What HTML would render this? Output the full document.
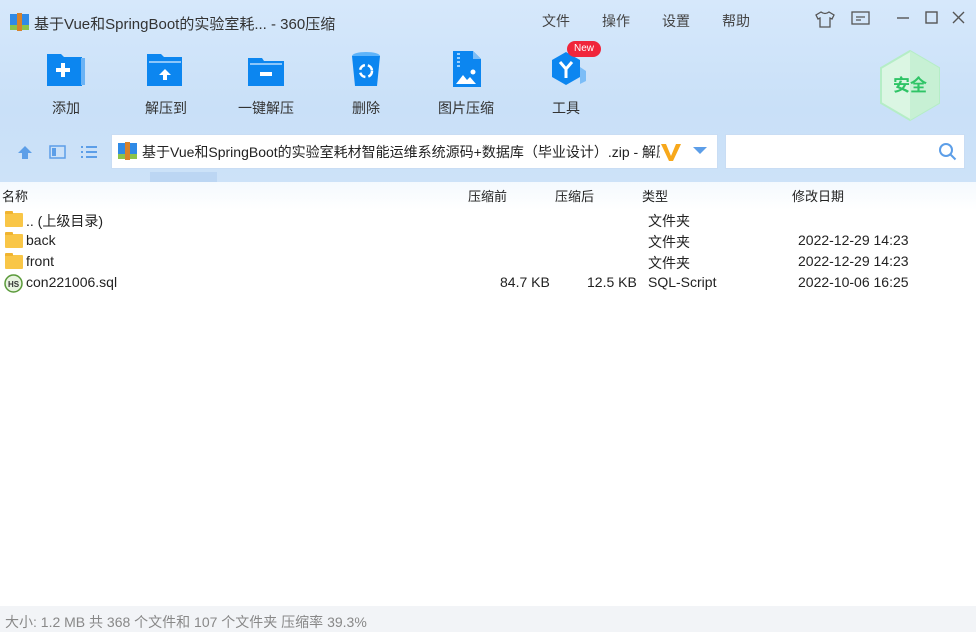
<!DOCTYPE html>
<html><head><meta charset="utf-8"><style>
*{margin:0;padding:0;box-sizing:border-box}
body{width:976px;height:640px;overflow:hidden;font-family:"Liberation Sans","Noto Sans CJK SC",sans-serif;background:#fff;position:relative;font-size:14px;color:#222}
.top{position:absolute;left:0;top:0;width:976px;height:182px;background:linear-gradient(180deg,#d6e8fb 0%,#c9e0f8 60%,#cde2f8 100%)}
.a{position:absolute;white-space:nowrap}
.menu{top:11px;font-size:14px;color:#444}
.tb{position:absolute;top:50px;width:40px;height:40px}
.lbl{position:absolute;top:98px;font-size:14px;color:#333;text-align:center;width:100px}
.hdr{position:absolute;top:182px;left:0;width:976px;height:28px;background:linear-gradient(#f4f9fe,#fff)}
.hdr span{position:absolute;top:4px;font-size:13px;color:#222}
.row{position:absolute;left:0;width:976px;height:21px;font-size:14px}
.row span{position:absolute;top:1px}
.fold{position:absolute;left:5px;top:3px;width:18px;height:14px;background:#f9c647;border-radius:1px}
.fold:before{content:"";position:absolute;left:0;top:-2px;width:8px;height:3px;background:#f0b430;border-radius:1px 1px 0 0}
</style></head><body>
<div class="top"></div>
<svg class="a" style="left:10px;top:13px" width="19" height="18"><rect x="0" y="1" width="19" height="16" fill="#2f8ae6"/><rect x="0" y="12" width="19" height="5" fill="#8bc34a"/><rect x="7" y="0" width="5" height="18" fill="#d8822a"/></svg>
<div class="a" style="left:34px;top:13px;font-size:15px;color:#333">基于Vue和SpringBoot的实验室耗... - 360压缩</div>
<div class="a menu" style="left:542px">文件</div>
<div class="a menu" style="left:602px">操作</div>
<div class="a menu" style="left:662px">设置</div>
<div class="a menu" style="left:722px">帮助</div>
<svg class="a" style="left:815px;top:10px" width="20" height="18" fill="none" stroke="#555" stroke-width="1.3"><path d="M6 2 L1 5 L3 9 L5 8 V17 H15 V8 L17 9 L19 5 L14 2 Q10 5 6 2Z"/></svg>
<svg class="a" style="left:851px;top:11px" width="20" height="16" fill="none" stroke="#555" stroke-width="1.3"><rect x="1" y="1" width="17" height="12"/><path d="M5 6H14M5 9H10"/></svg>
<svg class="a" style="left:897px;top:10px" width="80" height="18" stroke="#555" stroke-width="1.4" fill="none"><path d="M0 8H12"/><rect x="29" y="2" width="11" height="11"/><path d="M56 2L67 13M67 2L56 13"/></svg>
<svg class="tb" style="left:46px" viewBox="0 0 40 40"><path d="M1 4h14l3 3h18v29H1z" fill="#0c86f0"/><rect x="35" y="8" width="4" height="27" fill="#6bb3f5"/><path d="M17 13v14M10 20h14" stroke="#fff" stroke-width="4"/></svg>
<svg class="tb" style="left:146px" viewBox="0 0 40 40"><path d="M1 4h14l3 3h18v29H1z" fill="#0c86f0"/><path d="M3 12h32" stroke="#8cc6fa" stroke-width="2"/><path d="M19 19l-6 6h4v5h4v-5h4z" fill="#fff"/></svg>
<svg class="tb" style="left:246px" viewBox="0 0 40 40"><path d="M2 8h14l2 3h20v25H2z" fill="#0c86f0"/><path d="M4 14h32" stroke="#8cc6fa" stroke-width="2"/><rect x="14" y="22" width="12" height="4" fill="#fff"/></svg>
<svg class="tb" style="left:346px" viewBox="0 0 40 40"><ellipse cx="20" cy="6" rx="14" ry="4" fill="#5fb4fa"/><path d="M6 6h28l-3 30H9z" fill="#0c86f0"/><circle cx="20" cy="21" r="6" fill="none" stroke="#fff" stroke-width="2.5" stroke-dasharray="7 3"/></svg>
<svg class="tb" style="left:446px" viewBox="0 0 40 40"><path d="M7 1h20l8 8v28H7z" fill="#0c86f0"/><path d="M27 1v8h8z" fill="#7cbdf7"/><path d="M10 34l7-9 4 5 3-3 6 7z" fill="#fff"/><circle cx="27" cy="22" r="2.5" fill="#fff"/><path d="M11 4h3M11 8h3M11 12h3M11 16h3" stroke="#9bd0ff" stroke-width="2"/></svg>
<svg class="tb" style="left:546px" viewBox="0 0 40 40"><path d="M20 2l14 8v17l-14 8-14-8V10z" fill="#0c86f0"/><path d="M34 17l6 4v10l-6 3z" fill="#7cbdf7"/><path d="M14 12l6 7 6-7M20 19v9" stroke="#fff" stroke-width="3" fill="none"/></svg>
<div class="a" style="left:567px;top:41px;width:34px;height:16px;background:#f0253b;border-radius:8px;color:#fff;font-size:10px;text-align:center;line-height:16px">New</div>
<div class="lbl" style="left:16px">添加</div>
<div class="lbl" style="left:116px">解压到</div>
<div class="lbl" style="left:216px">一键解压</div>
<div class="lbl" style="left:316px">删除</div>
<div class="lbl" style="left:416px">图片压缩</div>
<div class="lbl" style="left:516px">工具</div>
<svg class="a" style="left:879px;top:50px" width="62" height="72"><path d="M31 1l29 17v35l-29 17-29-17V18z" fill="#dbf6e3" stroke="#b5edc6" stroke-width="2"/><path d="M31 1l29 17v35l-29 17z" fill="#c7f0d4"/><text x="31" y="41" font-size="17" text-anchor="middle" fill="#2fc466" font-weight="bold" font-family="Noto Sans CJK SC,sans-serif">安全</text></svg>
<svg class="a" style="left:16px;top:143px" width="90" height="18"><path d="M9 3L2 10h4v6h6v-6h4z" fill="#5c9ee8"/><rect x="34" y="3" width="15" height="12" fill="none" stroke="#5c9ee8" stroke-width="1.5"/><rect x="36" y="5" width="4" height="8" fill="#5c9ee8"/><path d="M65 4h2M65 9h2M65 14h2M70 4h11M70 9h11M70 14h11" stroke="#5c9ee8" stroke-width="2"/></svg>
<div class="a" style="left:111px;top:134px;width:607px;height:35px;background:#fff;border:1px solid #c9ddf4"></div>
<svg class="a" style="left:118px;top:142px" width="19" height="18"><rect x="0" y="1" width="19" height="16" fill="#2f8ae6"/><rect x="0" y="12" width="19" height="5" fill="#8bc34a"/><rect x="7" y="0" width="5" height="18" fill="#d8822a"/></svg>
<div class="a" style="left:142px;top:142px;font-size:14px;color:#222;width:518px;overflow:hidden">基于Vue和SpringBoot的实验室耗材智能运维系统源码+数据库（毕业设计）.zip - 解压</div>
<svg class="a" style="left:660px;top:142px" width="22" height="20"><path d="M1 2h5l5 12 5-12h5l-8 17h-4z" fill="#f7a81b"/></svg>
<svg class="a" style="left:693px;top:147px" width="14" height="8"><path d="M0 0h14l-7 7z" fill="#5c9ee8"/></svg>
<div class="a" style="left:725px;top:134px;width:240px;height:35px;background:#fff;border:1px solid #c9ddf4"></div>
<svg class="a" style="left:938px;top:142px" width="20" height="20" fill="none" stroke="#5c9ee8" stroke-width="2"><circle cx="8" cy="8" r="6"/><path d="M12.5 12.5l5 5"/></svg>
<div class="a" style="left:150px;top:172px;width:67px;height:10px;background:#bcd6f3"></div>
<div class="hdr"><span style="left:2px">名称</span><span style="left:468px">压缩前</span><span style="left:555px">压缩后</span><span style="left:642px">类型</span><span style="left:792px">修改日期</span></div>
<div class="row" style="top:210px"><div class="fold"></div><span style="left:26px">.. (上级目录)</span><span style="left:648px">文件夹</span></div>
<div class="row" style="top:231px"><div class="fold"></div><span style="left:26px">back</span><span style="left:648px">文件夹</span><span style="left:798px">2022-12-29 14:23</span></div>
<div class="row" style="top:252px"><div class="fold"></div><span style="left:26px">front</span><span style="left:648px">文件夹</span><span style="left:798px">2022-12-29 14:23</span></div>
<div class="row" style="top:273px"><svg style="position:absolute;left:4px;top:1px" width="19" height="19"><circle cx="9.5" cy="9.5" r="8.5" fill="#e8f3e0" stroke="#5a9a3a" stroke-width="1.5"/><text x="9.5" y="13" font-size="8" font-weight="bold" text-anchor="middle" fill="#333" font-family="Liberation Sans">HS</text></svg><span style="left:26px">con221006.sql</span><span style="left:500px">84.7 KB</span><span style="left:587px">12.5 KB</span><span style="left:648px">SQL-Script</span><span style="left:798px">2022-10-06 16:25</span></div>
<div class="a" style="left:0;top:606px;width:976px;height:26px;background:#f2f4f7"></div>
<div class="a" style="left:5px;top:612px;font-size:14px;color:#888">大小: 1.2 MB 共 368 个文件和 107 个文件夹 压缩率 39.3%</div>
<div class="a" style="left:0;top:632px;width:976px;height:8px;background:#fff"></div>
</body></html>
